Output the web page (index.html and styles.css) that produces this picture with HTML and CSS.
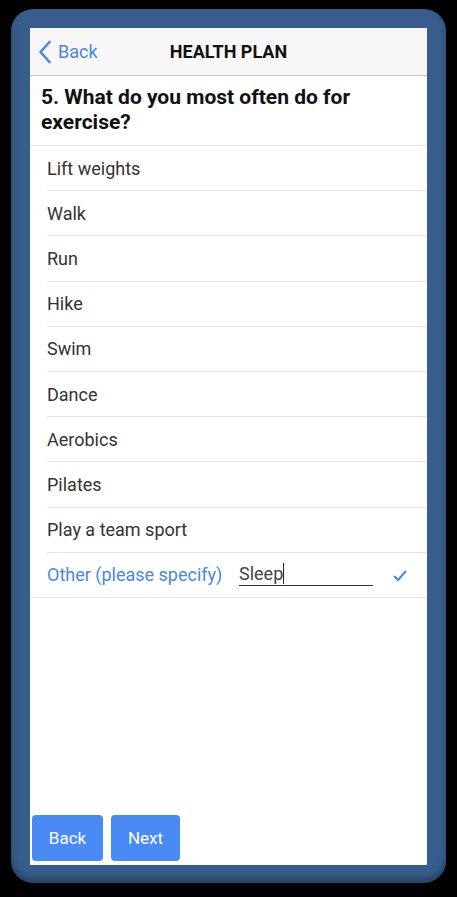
FILE: index.html
```html
<!DOCTYPE html>
<html>
<head>
<meta charset="utf-8">
<link rel="stylesheet" href="styles.css">
</head>
<body>
<div class="device">
  <div class="screen">
    <div class="navbar">
      <a class="navback">
        <svg width="14" height="24" viewBox="0 0 14 24"><path d="M11.5 2 L2.5 12 L11.5 22" fill="none" stroke="#4a86e8" stroke-width="2.6" stroke-linecap="round" stroke-linejoin="round"/></svg>
        <span>Back</span>
      </a>
      <div class="navtitle">HEALTH PLAN</div>
    </div>
    <div class="question">5. What do you most often do for exercise?</div>
    <ul class="choices">
      <li>Lift weights</li>
      <li>Walk</li>
      <li>Run</li>
      <li>Hike</li>
      <li>Swim</li>
      <li>Dance</li>
      <li>Aerobics</li>
      <li>Pilates</li>
      <li>Play a team sport</li>
      <li class="other">
        <span class="otherlabel">Other (please specify)</span>
        <span class="otherinput">Sleep<span class="caret"></span></span>
        <svg class="tick" width="14" height="12" viewBox="0 0 14 12"><path d="M1.5 6.5 L5 10 L12.5 1.5" fill="none" stroke="#4a86e8" stroke-width="2" stroke-linecap="round" stroke-linejoin="round"/></svg>
      </li>
    </ul>
    <div class="buttons">
      <button class="btn back">Back</button>
      <button class="btn next">Next</button>
    </div>
  </div>
</div>
</body>
</html>
```

FILE: styles.css
```css
html, body {
    margin: 0;
    padding: 0;
    background: #000;
}
body {
    font-family: Roboto, "Liberation Sans", sans-serif;
    width: 457px;
    height: 897px;
    overflow: hidden;
}
.device {
    margin: 9px 0 0 11px;
    width: 435px;
    height: 874px;
    box-sizing: border-box;
    padding: 19px 19px 18px 19px;
    background: #385d8d;
    border-radius: 22px;
    box-shadow: inset 0 -5px 6px rgba(0, 0, 0, 0.3);
}
.screen {
    width: 397px;
    height: 837px;
    background: #fff;
    display: flex;
    flex-direction: column;
}
.navbar {
    height: 48px;
    flex-shrink: 0;
    box-sizing: border-box;
    background: #f7f7f7;
    border-bottom: 1px solid #c8c8c8;
    position: relative;
    display: flex;
    align-items: center;
}
.navback {
    display: flex;
    align-items: center;
    padding-left: 8px;
    color: #4a86e8;
    font-size: 18px;
    gap: 6px;
}
.navtitle {
    position: absolute;
    left: 0;
    right: 0;
    text-align: center;
    font-weight: bold;
    font-size: 18px;
    color: #111;
    pointer-events: none;
}
.question {
    padding: 9px 20px 10px 11px;
    font-size: 21px;
    line-height: 25px;
    font-weight: bold;
    color: #111;
    border-bottom: 1px solid #e4e4e4;
}
.choices {
    list-style: none;
    margin: 0;
    padding: 0;
}
.choices li {
    height: 44.2px;
    margin-left: 17px;
    border-bottom: 1px solid #e4e4e4;
    display: flex;
    align-items: center;
    font-size: 18px;
    color: #333;
}
.choices li.other {
    margin-left: 0;
    padding-left: 17px;
    color: #4a86e8;
}
.otherlabel {
    width: 192px;
}
.otherinput {
    width: 134px;
    height: 22px;
    border-bottom: 1px solid #333;
    color: #444;
    font-size: 18px;
    line-height: 21px;
    display: flex;
    align-items: flex-start;
}
.caret {
    display: inline-block;
    width: 1px;
    height: 21px;
    background: #222;
}
.tick {
    margin-left: 20px;
    margin-top: 2px;
}
.buttons {
    margin-top: auto;
    padding: 0 0 4px 2px;
    display: flex;
    gap: 8px;
}
.btn {
    height: 46px;
    border: none;
    border-radius: 4px;
    background: #4a8af4;
    color: #fff;
    font-family: Roboto, "Liberation Sans", sans-serif;
    font-size: 17px;
}
.btn.back {
    width: 71px;
}
.btn.next {
    width: 69px;
}
```
